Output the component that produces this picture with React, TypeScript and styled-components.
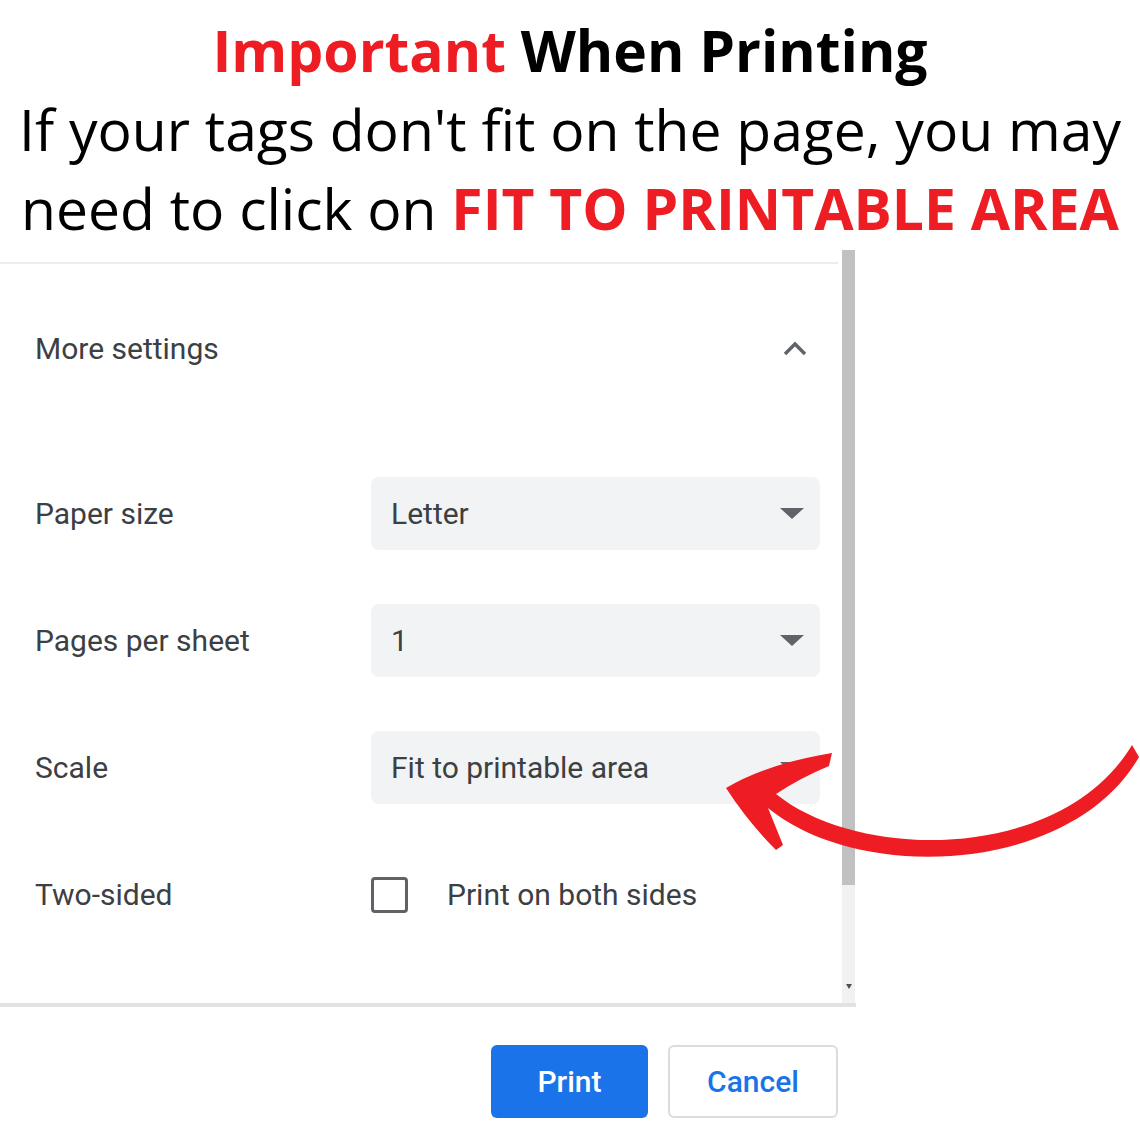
import React from "react";
import styled, { createGlobalStyle } from "styled-components";

const Global = createGlobalStyle`
  html, body { margin: 0; padding: 0; background: #ffffff; }
  #root { width: 1140px; height: 1140px; }
`;

const Page = styled.div`
  position: relative;
  width: 1140px;
  height: 1140px;
  background: #ffffff;
  overflow: hidden;
`;

const Header = styled.header`
  height: 250px;
  display: flex;
  flex-direction: column;
  align-items: center;
  padding-top: 11px;
  box-sizing: border-box;
  font-family: "Open Sans", sans-serif;
  color: #000000;
`;

const Line = styled.div<{ $bold?: boolean }>`
  font-size: 57px;
  line-height: 79px;
  font-weight: ${(p) => (p.$bold ? 700 : 400)};
  white-space: nowrap;
`;

const Red = styled.span`
  color: #ee1d23;
  font-weight: 700;
`;

const Dialog = styled.section`
  width: 856px;
  font-family: Roboto, "Liberation Sans", sans-serif;
  color: #3c4043;
`;

const ScrollArea = styled.div`
  display: flex;
  height: 753px;
  border-bottom: 4px solid #e2e2e2;
`;

const Panel = styled.div`
  width: 840px;
  padding-top: 12px;
  box-sizing: border-box;
  display: flex;
  flex-direction: column;
`;

const Divider = styled.div`
  width: 838px;
  height: 2px;
  background: #ededed;
`;

const MoreRow = styled.div`
  height: 168px;
  margin-bottom: 18px;
  display: flex;
  align-items: center;
  justify-content: space-between;
  padding: 0 32px 0 35px;
  font-size: 30px;
`;

const SettingRow = styled.div`
  height: 127px;
  display: flex;
  align-items: center;
  padding-left: 35px;
`;

const Label = styled.div`
  width: 336px;
  font-size: 30px;
`;

const Select = styled.div`
  width: 449px;
  height: 73px;
  box-sizing: border-box;
  background: #f1f3f4;
  border-radius: 8px;
  display: flex;
  align-items: center;
  justify-content: space-between;
  padding: 0 16px 0 20px;
  font-size: 30px;
`;

const Caret = styled.span`
  width: 0;
  height: 0;
  border-left: 12px solid transparent;
  border-right: 12px solid transparent;
  border-top: 11px solid #5f6368;
`;

const Checkbox = styled.span`
  width: 37px;
  height: 36px;
  box-sizing: border-box;
  border: 3px solid #5f6368;
  border-radius: 4px;
  margin-right: 39px;
`;

const CheckText = styled.span`
  font-size: 30px;
`;

const Scrollbar = styled.div`
  width: 16px;
  display: flex;
  flex-direction: column;
`;

const Thumb = styled.div`
  height: 635px;
  margin-left: 2px;
  width: 13px;
  background: #c1c1c1;
`;

const Track = styled.div`
  flex: 1;
  margin-left: 2px;
  width: 13px;
  background: #f1f1f1;
  display: flex;
  align-items: flex-end;
  justify-content: center;
  padding-bottom: 14px;
  box-sizing: border-box;
`;

const TrackArrow = styled.span`
  width: 0;
  height: 0;
  border-left: 3px solid transparent;
  border-right: 3px solid transparent;
  border-top: 5px solid #505050;
`;

const Footer = styled.div`
  display: flex;
  justify-content: flex-end;
  gap: 20px;
  padding: 38px 18px 0 0;
`;

const Button = styled.button<{ $primary?: boolean }>`
  height: 73px;
  width: ${(p) => (p.$primary ? "157px" : "170px")};
  border-radius: 6px;
  border: ${(p) => (p.$primary ? "none" : "2px solid #dadce0")};
  background: ${(p) => (p.$primary ? "#1a73e8" : "#ffffff")};
  color: ${(p) => (p.$primary ? "#ffffff" : "#1a73e8")};
  font-family: Roboto, "Liberation Sans", sans-serif;
  font-size: 30px;
  font-weight: 500;
  padding: 0;
`;

const ArrowOverlay = styled.svg`
  position: absolute;
  left: 0;
  top: 0;
  width: 1140px;
  height: 1140px;
  pointer-events: none;
`;

const ChevronUp = () => (
  <svg width="26" height="16" viewBox="0 0 26 16">
    <polyline
      points="3,14 13,4 23,14"
      fill="none"
      stroke="#5f6368"
      strokeWidth="3.4"
    />
  </svg>
);

const rows = [
  { label: "Paper size", value: "Letter" },
  { label: "Pages per sheet", value: "1" },
  { label: "Scale", value: "Fit to printable area" },
];

export default function App() {
  return (
    <Page>
      <Global />
      <Header>
        <Line $bold>
          <Red>Important</Red> When Printing
        </Line>
        <Line>If your tags don't fit on the page, you may</Line>
        <Line>
          need to click on <Red>FIT TO PRINTABLE AREA</Red>
        </Line>
      </Header>
      <Dialog>
        <ScrollArea>
          <Panel>
            <Divider />
            <MoreRow>
              <span>More settings</span>
              <ChevronUp />
            </MoreRow>
            {rows.map((r) => (
              <SettingRow key={r.label}>
                <Label>{r.label}</Label>
                <Select>
                  <span>{r.value}</span>
                  <Caret />
                </Select>
              </SettingRow>
            ))}
            <SettingRow>
              <Label>Two-sided</Label>
              <Checkbox />
              <CheckText>Print on both sides</CheckText>
            </SettingRow>
          </Panel>
          <Scrollbar>
            <Thumb />
            <Track>
              <TrackArrow />
            </Track>
          </Scrollbar>
        </ScrollArea>
        <Footer>
          <Button $primary>Print</Button>
          <Button>Cancel</Button>
        </Footer>
      </Dialog>
      <ArrowOverlay viewBox="0 0 1140 1140">
        <path
          d="M 726 788 Q 766 764 832 753 L 829 766 Q 800 778 776 794 C 860 862 1062 862 1132 745 L 1139 757 C 1072 874 860 884 768 808 L 783 845 L 776 850 Q 748 822 726 788 Z"
          fill="#ee1d23"
        />
      </ArrowOverlay>
    </Page>
  );
}
